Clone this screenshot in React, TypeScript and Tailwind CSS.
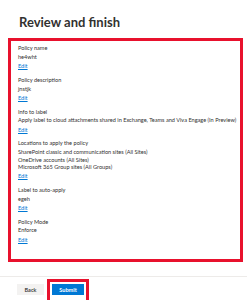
const sections: { label: string; values: string[] }[] = [
  { label: 'Policy name', values: ['he4wht'] },
  { label: 'Policy description', values: ['jnstjk'] },
  {
    label: 'Info to label',
    values: ['Apply label to cloud attachments shared in Exchange, Teams and Viva Engage (In Preview)'],
  },
  {
    label: 'Locations to apply the policy',
    values: [
      'SharePoint classic and communication sites (All Sites)',
      'OneDrive accounts (All Sites)',
      'Microsoft 365 Group sites (All Groups)',
    ],
  },
  { label: 'Label to auto-apply', values: ['egeh'] },
  { label: 'Policy Mode', values: ['Enforce'] },
];

export default function App() {
  return (
    <div className="w-[247px] h-[300px] bg-white overflow-hidden text-[#323130] font-['Lato','Noto_Sans',sans-serif]">
      <h1 className="pl-[19px] pt-[14px] h-[38px] text-[13px] leading-[16px] font-bold">
        Review and finish
      </h1>

      <div className="ml-[8px] w-[235px] h-[224px] border-[3px] border-[#e8112d] px-[7px] pt-[3px]">
        <div className="flex flex-col gap-[6px]">
          {sections.map((s) => (
            <div key={s.label} className="flex flex-col text-[5.6px] leading-[7.3px]">
              <span className="mb-[1.6px]">{s.label}</span>
              {s.values.map((v) => (
                <span key={v} className="whitespace-nowrap">{v}</span>
              ))}
              <a href="#" className="mt-[2.3px] text-[#0078d4] underline">
                Edit
              </a>
            </div>
          ))}
        </div>
      </div>

      <div className="mt-[14px] border-t border-[#edebe9] flex items-start gap-[3px] pl-[17px] pt-[2px]">
        <button className="mt-[5px] w-[27px] h-[11px] bg-[#f3f2f1] text-[5.6px] font-semibold leading-none text-[#323130]">
          Back
        </button>
        <div className="border-[3px] border-[#e8112d] px-[2px] pt-[2px] h-[30px] shrink-0">
          <button className="block w-[32px] h-[11px] bg-[#0078d4] text-white text-[5.6px] font-bold leading-none">
            Submit
          </button>
        </div>
      </div>
    </div>
  );
}
